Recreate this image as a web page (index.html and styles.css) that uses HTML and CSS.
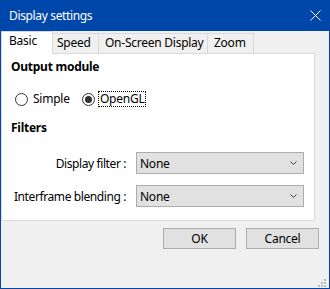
FILE: index.html
```html
<!DOCTYPE html>
<html>
<head>
<meta charset="utf-8">
<title>Display settings</title>
<link rel="stylesheet" href="styles.css">
</head>
<body>
<div class="window">
  <div class="titlebar">
    <span class="title">Display settings</span>
    <svg class="close" width="11" height="11" viewBox="0 0 11 11"><path d="M0.5 0.5 L10.5 10.5 M10.5 0.5 L0.5 10.5" stroke="#fff" stroke-width="1" fill="none"/></svg>
  </div>
  <div class="main">
    <div class="tabctl">
      <div class="tabs">
        <div class="tab active tab-basic">Basic</div>
        <div class="tab tab-speed">Speed</div>
        <div class="tab tab-osd">On-Screen Display</div>
        <div class="tab tab-zoom">Zoom</div>
      </div>
      <div class="panel">
        <div class="group-title">Output module</div>
        <div class="radios">
          <div class="radio radio-first"><span class="circle"></span><span class="rlabel">Simple</span></div>
          <div class="radio"><span class="circle checked"></span><span class="rlabel focus">OpenGL</span></div>
        </div>
        <div class="group-title filters">Filters</div>
        <div class="form">
          <div class="label">Display filter :</div>
          <div class="select"><span>None</span><svg width="7" height="4" viewBox="0 0 7 4"><polyline points="0.5,0.5 3.5,3.5 6.5,0.5" fill="none" stroke="#3c3c3c" stroke-width="1"/></svg></div>
          <div class="label">Interframe blending :</div>
          <div class="select"><span>None</span><svg width="7" height="4" viewBox="0 0 7 4"><polyline points="0.5,0.5 3.5,3.5 6.5,0.5" fill="none" stroke="#3c3c3c" stroke-width="1"/></svg></div>
        </div>
      </div>
    </div>
    <div class="buttons">
      <div class="btn">OK</div>
      <div class="btn">Cancel</div>
    </div>
    <div class="grip-row">
      <svg class="grip" width="8" height="8" viewBox="0 0 8 8">
        <rect x="6" y="0" width="2" height="2" fill="#bdbdbd"/>
        <rect x="3" y="3" width="2" height="2" fill="#bdbdbd"/>
        <rect x="6" y="3" width="2" height="2" fill="#bdbdbd"/>
        <rect x="0" y="6" width="2" height="2" fill="#bdbdbd"/>
        <rect x="3" y="6" width="2" height="2" fill="#bdbdbd"/>
        <rect x="6" y="6" width="2" height="2" fill="#bdbdbd"/>
      </svg>
    </div>
  </div>
</div>
</body>
</html>
```

FILE: styles.css
```css
html, body {
  margin: 0;
  padding: 0;
}
body {
  font-family: "Noto Sans", "Open Sans", sans-serif;
  font-size: 12px;
  letter-spacing: -0.25px;
  color: #000;
  background: #f0f0f0;
}
.window {
  width: 330px;
  height: 289px;
  box-sizing: border-box;
  border: 1px solid #0047ab;
  border-top: 0;
  background: #f0f0f0;
  display: flex;
  flex-direction: column;
}
.titlebar {
  height: 31px;
  flex: none;
  background: #0047ab;
  color: #fff;
  display: flex;
  align-items: center;
  justify-content: space-between;
  padding: 0 8px;
}
.title {
  line-height: 31px;
  letter-spacing: -0.35px;
}
.close {
  display: block;
}
.main {
  flex: 1;
  display: flex;
  flex-direction: column;
}
.tabctl {
  width: 314px;
}
.tabs {
  display: flex;
  align-items: flex-end;
  height: 22px;
}
.tab {
  box-sizing: border-box;
  height: 20px;
  border: 1px solid #d9d9d9;
  border-bottom: 0;
  margin-left: -1px;
  padding-top: 1px;
  line-height: 16px;
  background: #f0f0f0;
  white-space: nowrap;
  overflow: hidden;
}
.tab.active {
  height: 23px;
  margin-left: 0;
  margin-bottom: -1px;
  background: #fff;
  position: relative;
  z-index: 1;
}
.tab-basic { width: 52px; padding-left: 7px; }
.tab-speed { width: 47px; padding-left: 4px; }
.tab-osd { width: 110px; padding-left: 6px; }
.tab-zoom { width: 47px; padding-left: 6px; }
.panel {
  box-sizing: border-box;
  height: 168px;
  background: #fff;
  border: 1px solid #d9d9d9;
  padding: 5px 0 0 9px;
}
.group-title {
  font-weight: 700;
  line-height: 16px;
}
.filters {
  margin-top: 13px;
}
.radios {
  display: flex;
  align-items: center;
  height: 16px;
  margin-top: 16px;
  margin-left: 4px;
}
.radio {
  display: flex;
  align-items: center;
}
.radio-first {
  width: 67px;
}
.circle {
  box-sizing: border-box;
  width: 13px;
  height: 13px;
  border: 1px solid #333;
  border-radius: 50%;
  background: #fff;
  display: flex;
  align-items: center;
  justify-content: center;
  margin-right: 3px;
}
.circle.checked::after {
  content: "";
  width: 7px;
  height: 7px;
  border-radius: 50%;
  background: #333;
}
.rlabel {
  line-height: 14px;
  padding: 0 1px;
  border: 1px solid transparent;
}
.rlabel.focus {
  border: 1px dotted #000;
}
.form {
  display: grid;
  grid-template-columns: 115px 168px;
  column-gap: 10px;
  row-gap: 11px;
  margin-top: 16px;
  align-items: center;
}
.label {
  text-align: right;
  white-space: nowrap;
  letter-spacing: -0.4px;
}
.select {
  box-sizing: border-box;
  height: 22px;
  background: #e1e1e1;
  border: 1px solid #adadad;
  display: flex;
  align-items: center;
  justify-content: space-between;
  padding: 0 6px 0 3px;
}
.select svg {
  display: block;
}
.buttons {
  display: flex;
  justify-content: flex-end;
  gap: 10px;
  margin-top: 7px;
  padding-right: 10px;
}
.btn {
  box-sizing: border-box;
  width: 73px;
  height: 21px;
  border: 1px solid #adadad;
  background: #e1e1e1;
  display: flex;
  align-items: center;
  justify-content: center;
}
.grip-row {
  margin-top: auto;
  display: flex;
  justify-content: flex-end;
  padding: 0 3px 1px 0;
}
.grip {
  display: block;
}
```
